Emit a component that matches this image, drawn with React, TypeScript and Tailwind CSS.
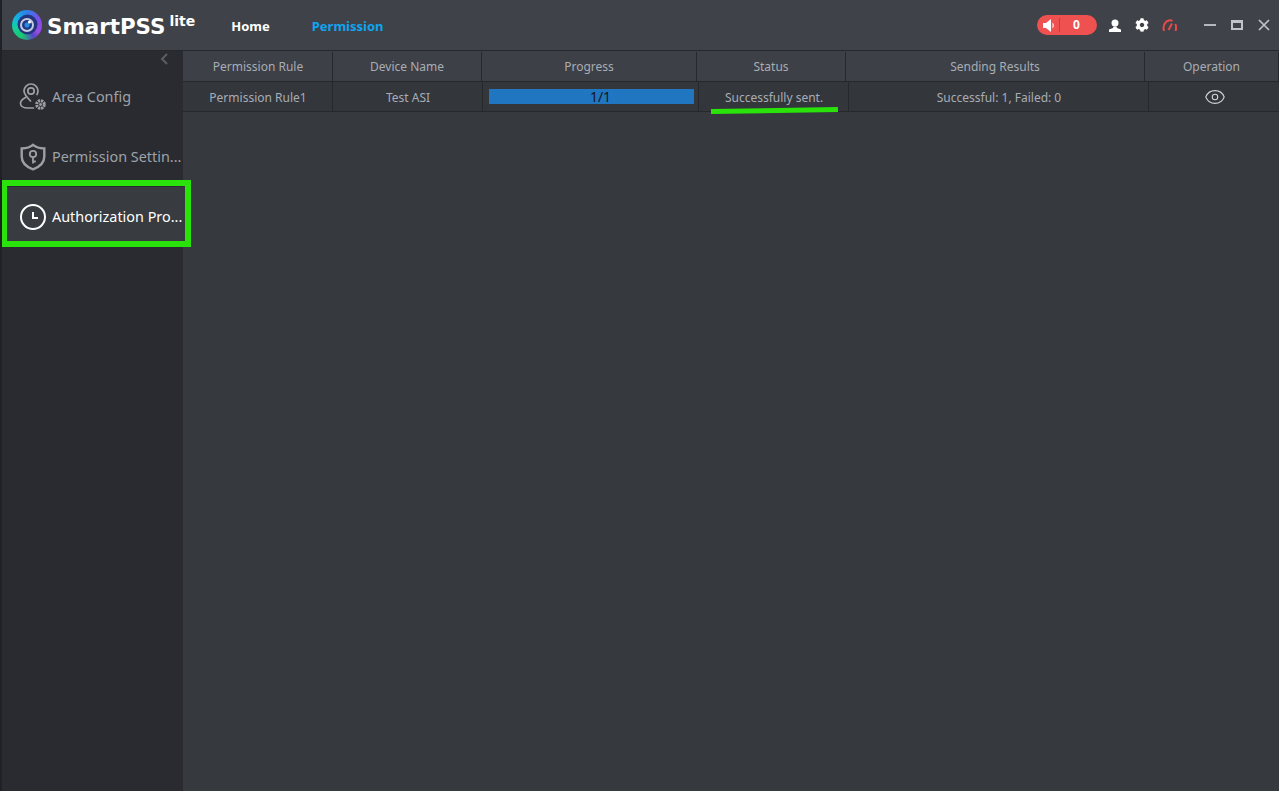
import { Eye } from 'lucide-react'
import { FaCog } from 'react-icons/fa'

const columns = [
  { title: 'Permission Rule', width: 'w-[150px]' },
  { title: 'Device Name', width: 'w-[150px]' },
  { title: 'Progress', width: 'w-[216px]' },
  { title: 'Status', width: 'w-[150px]' },
  { title: 'Sending Results', width: 'w-[300px]' },
  { title: 'Operation', width: 'flex-1' },
]

// start of each repeated watermark word, two diagonals across the window
const marks = [
  [-77, 757], [53, 627], [183, 497], [313, 367], [443, 240], [573, 107],
  [632, 797], [762, 667], [893, 537], [1020, 407], [1146, 280],
]

function Logo() {
  return (
    <div className="relative h-[30px] w-[30px] rounded-full bg-[conic-gradient(#2f7fe8_0deg,#7a4fe6_60deg,#9a4ce6_120deg,#5a45c8_150deg,#18c96e_205deg,#12cfa0_260deg,#14b4e0_300deg,#2f7fe8_360deg)]">
      <svg width="30" height="30" viewBox="0 0 30 30" className="absolute left-0 top-0">
        <circle cx="15.5" cy="14.500" r="10" fill="#24357f" />
        <circle cx="15" cy="15" r="7" fill="#c4cbe0" />
        <circle cx="15" cy="15" r="5" fill="#1e3a86" />
        <circle cx="15" cy="15" r="2.500" fill="#2a8ae0" />
        <circle cx="17.500" cy="12" r="1.600" fill="#ffffff" />
      </svg>
    </div>
  )
}

function AreaIcon() {
  return (
    <svg width="28" height="28" viewBox="0 0 28 28" fill="none" stroke="#9ca0a6" strokeWidth="1.700">
      <path d="M12 18.500C8 14.500 5 11.500 5 8a7 7 0 0 1 14 0c0 1.500-.5 2.800-1.300 4.200" />
      <circle cx="12" cy="8" r="3.200" />
      <path d="M6.500 14.500C3.500 16 1.500 17.800 1.500 20.500c0 3 3.500 4.500 7 4.500h6" strokeLinecap="round" />
      <circle cx="21.500" cy="21.500" r="3.800" strokeWidth="3" strokeDasharray="2.200 0.785" />
      <circle cx="21.500" cy="21.500" r="1.400" fill="#9ca0a6" stroke="none" />
    </svg>
  )
}

function ShieldIcon() {
  return (
    <svg width="26" height="28" viewBox="0 0 26 28" fill="none" stroke="#9ca0a6" strokeWidth="2.400">
      <path d="M13 1.800C15.500 4 20 5.300 24.300 5.500v8c0 6-4.300 10.300-11.300 12.800C6 23.800 1.700 19.500 1.700 13.500v-8C6 5.300 10.500 4 13 1.800z" />
      <circle cx="13" cy="11" r="3.200" strokeWidth="1.800" />
      <path d="M13 14.200v6.300M13 18.500h2.800" strokeWidth="1.800" />
    </svg>
  )
}

function ClockIcon() {
  return (
    <svg width="26" height="26" viewBox="0 0 26 26" fill="none" stroke="#ffffff" strokeWidth="2">
      <circle cx="13" cy="13" r="12" />
      <path d="M13 8v6h5" />
    </svg>
  )
}

export default function App() {
  return (
    <div className="relative flex h-[791px] w-[1279px] flex-col overflow-hidden border-l-2 border-[#1f2124] bg-[#36393e] font-['Noto_Sans','Liberation_Sans',sans-serif] text-[12px] text-[#a8adb5]">
      {/* top bar */}
      <header className="flex h-[51px] shrink-0 items-center border-b border-[#26282c] bg-[#3f4248]">
        <div className="ml-[10px]">
          <Logo />
        </div>
        <span className="ml-[5px] mt-[3px] font-['DejaVu_Sans',sans-serif] text-[21.400px] font-bold leading-none text-white">SmartPSS</span>
        <span className="mb-[9px] ml-[4px] font-['DejaVu_Sans',sans-serif] text-[14px] font-bold leading-none text-white">lite</span>
        <span className="ml-[36px] mt-[3px] text-[13px] font-bold text-white">Home</span>
        <span className="ml-[42px] mt-[3px] text-[13px] font-bold text-[#0ea5f0]">Permission</span>

        <div className="ml-auto flex items-center">
          <div className="flex h-[20px] w-[60px] items-center rounded-full bg-[#ef5050] text-white">
            <svg width="13" height="13" viewBox="0 0 13 13" className="ml-[6px]" fill="#ffffff">
              <path d="M0 4h3l5-4v13L3 9H0zM9.500 3.500c1.800 1.500 1.800 4.500 0 6z" />
            </svg>
            <span className="ml-[3px] h-[14px] w-px bg-[#c93b3b]" />
            <span className="ml-[13px] text-[12px] font-bold leading-none">0</span>
          </div>
          <svg width="12" height="13" viewBox="0 0 12 13" className="ml-[12px]" fill="#ffffff">
            <circle cx="6" cy="4" r="3.500" />
            <path d="M4.500 7.500h3l.5 1.500 4 1.500V13H0v-2.500L4 9z" />
          </svg>
          <FaCog size={14} color="#ffffff" className="ml-[14px]" />
          <svg width="15" height="12" viewBox="0 0 15 12" className="ml-[13px]" fill="none" stroke="#e84a4a" strokeWidth="2">
            <path d="M2 12C.2 6.500 4 1.200 8 1.200c1 0 1.800.2 2.500.6M13.400 5c.8 2 .8 4.500.2 7M6.500 11 10 4.500" />
          </svg>
          <span className="ml-[27px] h-[2px] w-[12px] bg-[#b4b8bd]" />
          <span className="ml-[15px] h-[10px] w-[12px] border-2 border-t-[3px] border-[#c0c4c8]" />
          <svg width="12" height="12" viewBox="0 0 12 12" className="ml-[15px] mr-[9px]" stroke="#c0c4c8" strokeWidth="1.700">
            <path d="M1 1l10 10M11 1 1 11" />
          </svg>
        </div>
      </header>

      <div className="flex flex-1">
        {/* left menu */}
        <aside className="relative w-[181px] shrink-0 bg-[#292b30] pt-[16px]">
          <svg width="8" height="12" viewBox="0 0 8 12" className="absolute left-[158px] top-[2px]" fill="none" stroke="#5a5e64" strokeWidth="2">
            <path d="M7 1 2 6l5 5" />
          </svg>
          <div className="flex h-[60px] items-center pl-[17px]">
            <AreaIcon />
            <span className="ml-[5px] text-[14.400px] text-[#9ea3aa]">Area Config</span>
          </div>
          <div className="flex h-[60px] items-center pl-[18px]">
            <ShieldIcon />
            <span className="ml-[6px] text-[14.400px] text-[#9ea3aa]">Permission Settin...</span>
          </div>
          <div className="flex h-[60px] items-center bg-[#383b40] pb-[1px] pl-[18px]">
            <ClockIcon />
            <span className="ml-[6px] whitespace-nowrap text-[14.400px] text-white">Authorization Pro...</span>
          </div>
          <div className="pointer-events-none absolute left-[-1px] top-[129px] h-[67px] w-[190px] border-[6px] border-[#2ae30b]" />
        </aside>

        {/* table */}
        <main className="relative flex-1">
          <div className="flex h-[31px] border-b border-[#26282c] bg-[#3d4046] pl-[1px] pt-[1px]">
            {columns.map((c) => (
              <div key={c.title} className={`${c.width} -ml-[1px] flex items-center justify-center border-r border-[#26282c] pl-[1px]`}>
                {c.title}
              </div>
            ))}
          </div>
          <div className="flex h-[30px] border-b border-[#26282c] bg-[#33363b]">
            <div className="flex w-[150px] items-center justify-center border-r border-[#26282c] pl-[1px] pt-[2px]">Permission Rule1</div>
            <div className="flex w-[150px] items-center justify-center border-r border-[#26282c] pl-[1px] pt-[2px]">Test ASI</div>
            <div className="flex w-[216px] items-center border-r border-[#26282c] pl-[6px]">
              <div className="flex h-[15px] w-[205px] items-center justify-center bg-[#2176c1] pl-[18px] text-[14px] text-[#14161a]">1/1</div>
            </div>
            <div className="flex w-[150px] items-center justify-center border-r border-[#26282c] pl-[1px] pt-[2px]">Successfully sent.</div>
            <div className="flex w-[300px] items-center justify-center border-r border-[#26282c] pl-[1px] pt-[2px]">Successful: 1, Failed: 0</div>
            <div className="flex flex-1 items-center justify-center pl-[1px]">
              <Eye size={22} strokeWidth={1.200} color="#d0d3d8" />
            </div>
          </div>
          <div className="absolute left-[528px] top-[57px] h-[5px] w-[127px] -rotate-1 bg-[#2ae30b]" />
        </main>
      </div>

      {/* faint watermark lying over everything */}
      <div className="pointer-events-none absolute inset-0 overflow-hidden">
        {marks.map(([x, y]) => (
          <span
            key={x}
            className="absolute origin-left -rotate-45 whitespace-nowrap font-['Liberation_Mono',monospace] text-[25px] leading-none text-white/[0.025]"
            style={{ left: x - 2, top: y - 12 }}
          >
            wb_addecc02
          </span>
        ))}
      </div>
    </div>
  )
}
